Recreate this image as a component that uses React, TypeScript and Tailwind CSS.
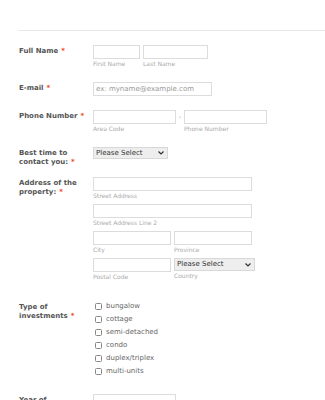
const font = { fontFamily: '"DejaVu Sans", Verdana, sans-serif' };

function Req() {
  return <span className="text-[#e42] ml-[3px]">*</span>;
}

function Label({ children }: { children: React.ReactNode }) {
  return (
    <div className="w-[74px] shrink-0 text-[7px] leading-[9px] font-bold text-[#555] pt-[2px]">
      {children}
      <Req />
    </div>
  );
}

function Sub({ children }: { children: React.ReactNode }) {
  return <div className="text-[6px] leading-[7px] text-[#aaa] mt-[1px]">{children}</div>;
}

function Field({ w, sub, placeholder }: { w: string; sub?: string; placeholder?: string }) {
  return (
    <div className="flex flex-col">
      <div className={`${w} h-[14px] border border-[#dcdcdc] bg-white text-[7px] leading-[12px] text-[#999] px-[2px]`}>
        {placeholder}
      </div>
      {sub && <Sub>{sub}</Sub>}
    </div>
  );
}

function Select({ w, h, sub }: { w: string; h: string; sub?: string }) {
  return (
    <div className="flex flex-col">
      <div className={`${w} ${h} border border-[#d8d8d8] bg-[#eeeeee] flex items-center justify-between px-[2px]`}>
        <span className="text-[7px] text-[#333]">Please Select</span>
        <svg width="6" height="4" viewBox="0 0 6 4" className="mr-[1px]">
          <path d="M0.5 0.5 L3 3 L5.5 0.5" stroke="#333" strokeWidth="1.2" fill="none" />
        </svg>
      </div>
      {sub && <Sub>{sub}</Sub>}
    </div>
  );
}

const types = ['bungalow', 'cottage', 'semi-detached', 'condo', 'duplex/triplex', 'multi-units'];

export default function App() {
  return (
    <div className="w-[325px] h-[400px] overflow-hidden bg-white" style={font}>
      <div className="pt-[30px] pl-[18px]">
        <div className="border-t border-[#e8e8e8]" />
        <div className="pl-[1px]">
          {/* Full Name */}
          <div className="flex mt-[14px] h-[37px]">
            <Label>Full Name</Label>
            <div className="flex gap-[3px]">
              <Field w="w-[47px]" sub="First Name" />
              <Field w="w-[65px]" sub="Last Name" />
            </div>
          </div>

          {/* Email */}
          <div className="flex h-[28px]">
            <Label>E-mail</Label>
            <Field w="w-[119px]" placeholder="ex: myname@example.com" />
          </div>

          {/* Phone */}
          <div className="flex h-[37px]">
            <Label>Phone Number</Label>
            <div className="flex">
              <Field w="w-[83px]" sub="Area Code" />
              <span className="text-[7px] leading-[14px] text-[#999] w-[8px] text-center">-</span>
              <Field w="w-[83px]" sub="Phone Number" />
            </div>
          </div>

          {/* Best time */}
          <div className="flex h-[30px]">
            <div className="w-[74px] shrink-0 text-[7px] leading-[9px] font-bold text-[#555] pt-[2px]">
              Best time to
              <br />
              contact you:
              <Req />
            </div>
            <Select w="w-[75px]" h="h-[12px]" />
          </div>

          {/* Address */}
          <div className="flex h-[124px]">
            <div className="w-[74px] shrink-0 text-[7px] leading-[9px] font-bold text-[#555] pt-[2px]">
              Address of the
              <br />
              property:
              <Req />
            </div>
            <div className="flex flex-col gap-[5px]">
              <Field w="w-[159px]" sub="Street Address" />
              <Field w="w-[159px]" sub="Street Address Line 2" />
              <div className="flex gap-[3px]">
                <Field w="w-[78px]" sub="City" />
                <Field w="w-[78px]" sub="Province" />
              </div>
              <div className="flex gap-[3px]">
                <Field w="w-[78px]" sub="Postal Code" />
                <Select w="w-[81px]" h="h-[13px]" sub="Country" />
              </div>
            </div>
          </div>

          {/* Type of investments */}
          <div className="flex h-[93px]">
            <div className="w-[74px] shrink-0 text-[7px] leading-[9px] font-bold text-[#555] pt-[2px]">
              Type of
              <br />
              investments
              <Req />
            </div>
            <div className="flex flex-col pl-[2px] -mt-[1px]">
              {types.map((t) => (
                <div key={t} className="flex items-center h-[13px]">
                  <span className="w-[7px] h-[7px] border border-[#888] rounded-[1.5px] mr-[4px]" />
                  <span className="text-[7px] text-[#666]">{t}</span>
                </div>
              ))}
            </div>
          </div>

          {/* Year of */}
          <div className="flex">
            <div className="w-[74px] shrink-0 text-[7px] leading-[9px] font-bold text-[#555] pt-[2px]">
              Year of
            </div>
            <Field w="w-[83px]" />
          </div>
        </div>
      </div>
    </div>
  );
}
